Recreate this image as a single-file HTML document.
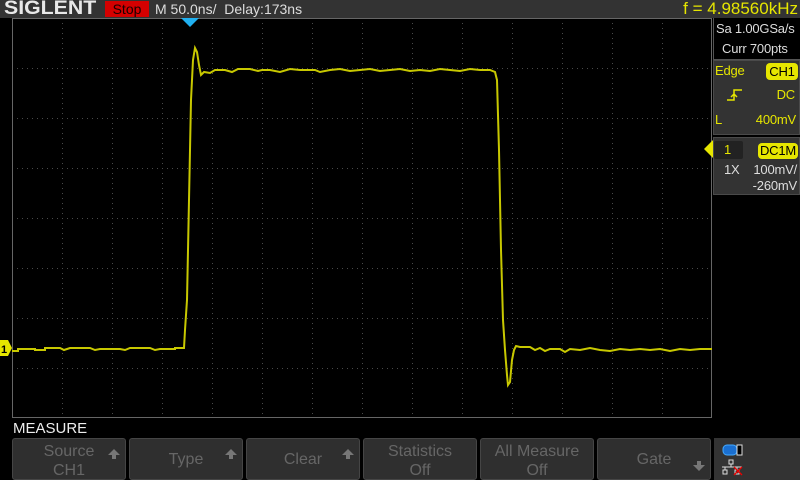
<!DOCTYPE html>
<html><head><meta charset="utf-8"><style>
*{margin:0;padding:0;box-sizing:border-box}
body{width:800px;height:480px;background:#000;overflow:hidden;position:relative;font-family:"Liberation Sans",sans-serif}
.top{position:absolute;left:0;top:0;width:800px;height:18px;background:#333}
.abs{position:absolute;white-space:nowrap}
.btn{position:absolute;top:438px;width:114px;height:42px;background:#2f2f2f;border:1px solid #454545;border-radius:3px;color:#666;font-size:16px;text-align:center;line-height:19px}
.arr{position:absolute;right:6px;top:13px;width:0;height:0}
.rp{font-size:13px;letter-spacing:-0.2px}
</style></head><body>
<div class="top"></div>
<div class="abs" style="left:4px;top:-2px;font-size:19px;font-weight:bold;color:#e8e8e8;transform:scaleX(1.12);transform-origin:left">SIGLENT</div>
<div class="abs" style="left:105px;top:1px;width:44px;height:16px;background:#d40000;font-size:14px;line-height:16px;text-align:center;color:#1a0000">Stop</div>
<div class="abs" style="left:155px;top:1px;font-size:14px;color:#ddd">M 50.0ns/&nbsp; Delay:173ns</div>
<div class="abs" style="right:2px;top:-1px;font-size:17px;color:#e6e600">f = 4.98560kHz</div>

<svg class="abs" style="left:0;top:0" width="800" height="480">
<g stroke="#4a4a4a" stroke-width="1" stroke-dasharray="1 4">
<line x1="62.5" y1="18" x2="62.5" y2="418"/><line x1="112.5" y1="18" x2="112.5" y2="418"/><line x1="162.5" y1="18" x2="162.5" y2="418"/><line x1="212.5" y1="18" x2="212.5" y2="418"/><line x1="262.5" y1="18" x2="262.5" y2="418"/><line x1="312.5" y1="18" x2="312.5" y2="418"/><line x1="362.5" y1="18" x2="362.5" y2="418"/><line x1="412.5" y1="18" x2="412.5" y2="418"/><line x1="462.5" y1="18" x2="462.5" y2="418"/><line x1="512.5" y1="18" x2="512.5" y2="418"/><line x1="562.5" y1="18" x2="562.5" y2="418"/><line x1="612.5" y1="18" x2="612.5" y2="418"/><line x1="662.5" y1="18" x2="662.5" y2="418"/>
<line x1="12" y1="68.5" x2="712" y2="68.5"/><line x1="12" y1="118.5" x2="712" y2="118.5"/><line x1="12" y1="168.5" x2="712" y2="168.5"/><line x1="12" y1="218.5" x2="712" y2="218.5"/><line x1="12" y1="268.5" x2="712" y2="268.5"/><line x1="12" y1="318.5" x2="712" y2="318.5"/><line x1="12" y1="368.5" x2="712" y2="368.5"/>
</g>
<rect x="12.5" y="18.5" width="699" height="399" fill="none" stroke="#666"/>
<polygon points="181,18 199,18 190,27" fill="#20b0f0"/>
<polyline fill="none" stroke="#c8c800" stroke-width="2" points="12,351 18,351 18,349 35,349 35,350 45,350 45,348 60,348 64,350 70,348 90,348 95,350 100,349 120,349 125,350 130,348 150,348 155,350 160,349 175,349 175,348 184,348 185,330 187,300 189,200 191,100 193,60 195,48 197,52 199,65 201,75 204,72 210,73 215,70 225,70 232,72 238,69 250,69 258,71 262,70 270,70 280,72 290,69 300,70 315,70 320,72 330,70 340,69 350,71 360,70 370,69 380,71 390,70 400,69 410,71 420,70 430,71 440,69 450,70 460,71 470,69 480,70 490,70 495,72 497,80 499,150 501,250 503,320 505,350 507,375 508,385 510,382 512,360 514,350 516,346 520,347 530,347 535,350 540,348 545,351 550,349 560,349 565,352 570,349 580,350 590,348 600,350 610,351 620,349 630,350 640,349 650,350 660,349 670,351 680,349 690,350 700,349 712,349"/>
<polygon points="0,340 8,340 12,348 8,356 0,356" fill="#e6e600"/>
<text x="1" y="353" font-size="11" font-family="Liberation Sans" fill="#000" font-weight="bold">1</text>
</svg>

<div class="abs" style="left:713px;top:18px;width:87px;height:42px;background:#000;border-left:1px solid #555;border-bottom:1px solid #555"></div>
<div class="abs rp" style="left:716px;top:21px;color:#ddd">Sa 1.00GSa/s</div>
<div class="abs rp" style="left:722px;top:41px;color:#ddd">Curr 700pts</div>
<div class="abs" style="left:713px;top:60px;width:87px;height:75px;background:#333;border:1px solid #4a4a4a"></div>
<div class="abs rp" style="left:715px;top:63px;color:#e6e600">Edge</div>
<div class="abs rp" style="left:766px;top:63px;width:32px;height:17px;background:#e6e600;border-radius:4px;color:#000;text-align:center;line-height:17px">CH1</div>
<svg class="abs" style="left:726px;top:88px" width="18" height="14"><path d="M1 12H8V2H16M5 9L8 6L11 9" fill="none" stroke="#e6e600" stroke-width="1.5"/></svg>
<div class="abs rp" style="right:5px;top:87px;color:#e6e600">DC</div>
<div class="abs rp" style="left:715px;top:112px;color:#e6e600">L</div>
<div class="abs rp" style="right:4px;top:112px;color:#e6e600">400mV</div>
<div class="abs" style="left:713px;top:137px;width:87px;height:58px;background:#333;border:1px solid #4a4a4a"></div>
<div class="abs rp" style="left:714px;top:141px;width:29px;height:18px;background:#222;border-radius:2px;color:#e6e600;line-height:18px;padding-left:10px">1</div>
<div class="abs rp" style="left:758px;top:143px;width:40px;height:16px;background:#e6e600;border-radius:4px;color:#000;text-align:center;line-height:16px">DC1M</div>
<div class="abs rp" style="left:724px;top:162px;color:#ddd">1X</div>
<div class="abs rp" style="right:3px;top:162px;color:#ddd">100mV/</div>
<div class="abs rp" style="right:3px;top:178px;color:#ddd">-260mV</div>
<svg class="abs" style="left:703px;top:140px" width="10" height="18"><polygon points="10,0 10,18 1,9" fill="#e6e600"/></svg>

<div class="abs" style="left:13px;top:420px;font-size:15px;color:#eee">MEASURE</div>
<div class="btn" style="left:12px"><div style="padding-top:3px">Source<br>CH1</div><svg class="arr" style="top:9px;right:5px;width:12px;height:12px"><path d="M6 1L12 7H8V11H4V7H0Z" fill="#777"/></svg></div>
<div class="btn" style="left:129px"><div style="padding-top:11px">Type</div><svg class="arr" style="top:9px;right:5px;width:12px;height:12px"><path d="M6 1L12 7H8V11H4V7H0Z" fill="#777"/></svg></div>
<div class="btn" style="left:246px"><div style="padding-top:11px">Clear</div><svg class="arr" style="top:9px;right:5px;width:12px;height:12px"><path d="M6 1L12 7H8V11H4V7H0Z" fill="#777"/></svg></div>
<div class="btn" style="left:363px"><div style="padding-top:3px">Statistics<br>Off</div></div>
<div class="btn" style="left:480px"><div style="padding-top:3px">All Measure<br>Off</div></div>
<div class="btn" style="left:597px"><div style="padding-top:11px">Gate</div><svg class="arr" style="top:21px;right:5px;width:12px;height:12px"><path d="M6 11L12 5H8V1H4V5H0Z" fill="#777"/></svg></div>
<div class="abs" style="left:714px;top:438px;width:86px;height:42px;background:#333"></div>
<svg class="abs" style="left:720px;top:442px" width="30" height="36">
<rect x="3" y="3" width="14" height="10" rx="4" fill="#1a6fd0" stroke="#4af" stroke-width="1"/><rect x="17" y="3" width="5" height="10" fill="#000" stroke="#ddd"/>
<rect x="9" y="18" width="4" height="4" fill="none" stroke="#ddd"/><path d="M11 22V25M2 25H22M5 25V28M17 25V28" stroke="#ddd" fill="none"/>
<rect x="3" y="28" width="4" height="4" fill="none" stroke="#ddd"/><rect x="15" y="28" width="4" height="4" fill="none" stroke="#ddd"/>
<path d="M14 25L22 33M22 25L14 33" stroke="#e00" stroke-width="1.3"/>
</svg>
</body></html>
